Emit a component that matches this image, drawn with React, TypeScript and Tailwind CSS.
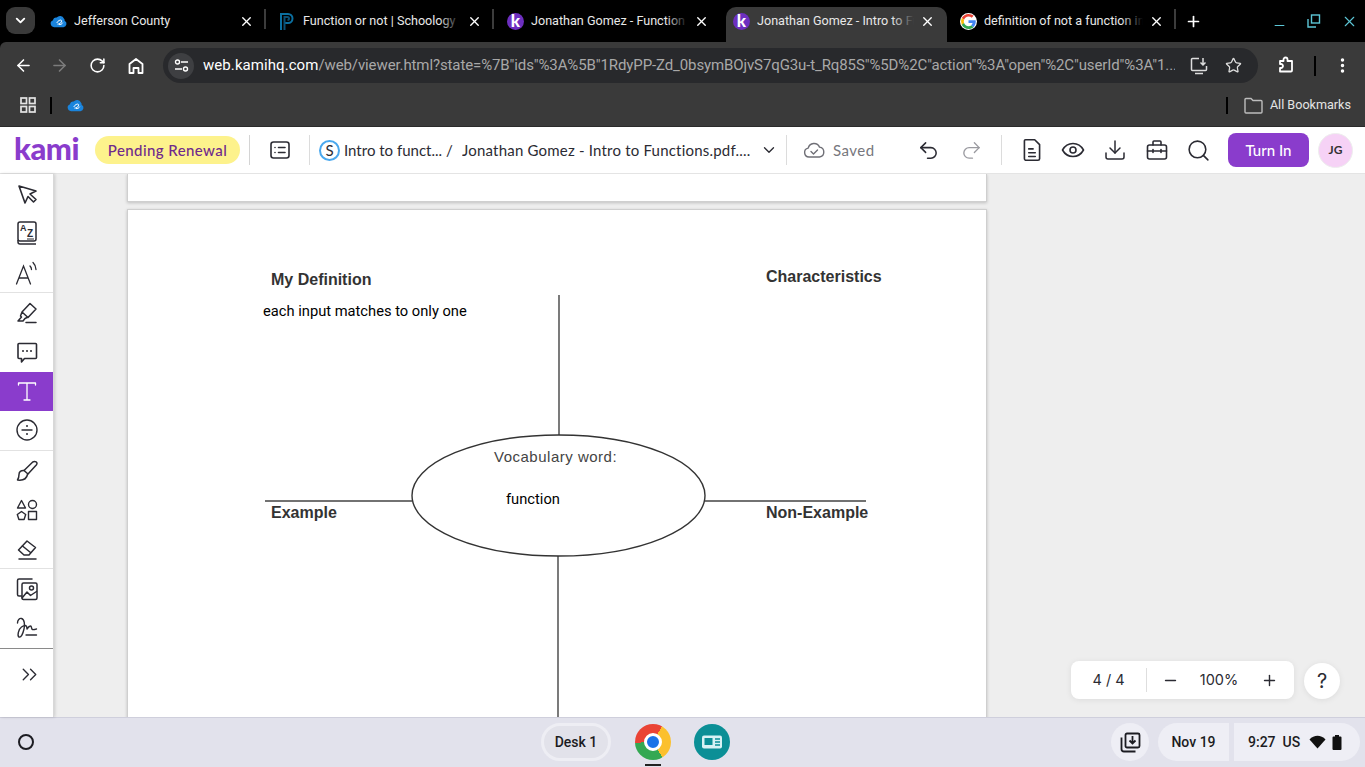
import React from "react";
import {
  ArrowLeft,
  ArrowRight,
  ChevronDown,
  ChevronsRight,
  Download,
  EllipsisVertical,
  Minus,
  Plus,
  RotateCw,
  Search,
  Star,
  Undo2,
  Redo2,
  X,
} from "lucide-react";

const roboto = { fontFamily: "Roboto, sans-serif" };

const Ico = ({ size = 24, className = "", sw = 1.6, children }: { size?: number; className?: string; sw?: number; children: React.ReactNode }) => (
  <svg width={size} height={size} viewBox="0 0 24 24" fill="none" stroke="currentColor" strokeWidth={sw} strokeLinecap="round" strokeLinejoin="round" className={className}>
    {children}
  </svg>
);

const CloudLogo = ({ size = 18 }: { size?: number }) => (
  <svg width={size} height={size * 0.75} viewBox="0 0 24 18">
    <path d="M5.500 17.500a4.800 4.800 0 0 1-1.500-9.300 4 4 0 0 1 5-3.500A5.500 5.500 0 0 1 18.500 6a3.500 3.500 0 0 1 1 3 4.500 4.500 0 0 1-1.500 8.500z" fill="#1a84dc" />
    <path d="M9 12c1.500-3.500 6-5 6.500-3s-3 5-5.500 4.500M12 14c2 .5 4-.5 5-2.500" stroke="#fff" strokeWidth="1.300" fill="none" />
  </svg>
);

const KamiBadge = () => (
  <div className="w-[17px] h-[17px] rounded-full bg-[#6d2fc0] flex items-center justify-center shrink-0 text-white text-[17px] font-black leading-none pb-[1px]" style={{ fontFamily: "Lato, sans-serif" }}>
    k
  </div>
);

const GoogleIcon = () => (
  <svg width="17" height="17" viewBox="0 0 48 48" className="shrink-0 rounded-full bg-white">
    <path fill="#ea4335" d="M24 10c3.500 0 6.500 1.200 9 3.400l5.500-5.500C34.800 4.600 29.800 2.500 24 2.500 15.600 2.500 8.400 7.300 5 14.300l6.500 5C13.200 14 18.100 10 24 10z" />
    <path fill="#4285f4" d="M44.500 24.500c0-1.500-.1-2.900-.4-4.300H24v8.200h11.500c-.5 2.700-2 5-4.300 6.500l6.400 5c3.900-3.500 6.900-9 6.900-15.400z" />
    <path fill="#fbbc05" d="M11.500 28.700A13.500 13.500 0 0 1 11.500 19.300l-6.500-5a21.500 21.500 0 0 0 0 19.400z" />
    <path fill="#34a853" d="M24 45.500c5.800 0 10.700-1.900 14.200-5.200l-6.400-5c-2 1.300-4.500 2.200-7.800 2.200-5.900 0-10.800-4-12.500-9.300l-6.500 5c3.400 7 10.600 12.300 19 12.300z" />
  </svg>
);

const SchoologyIcon = () => (
  <svg width="16" height="19" viewBox="0 0 16 19" fill="none" className="shrink-0">
    <path d="M2 18V2h7a4.500 4.500 0 0 1 0 9H6" stroke="#0b6fa0" strokeWidth="2" />
    <path d="M5.500 18V5h3a1.500 1.500 0 0 1 0 3" stroke="#0a4f74" strokeWidth="2" />
  </svg>
);

const Tab = ({ icon, title, active = false, sep = true, width, pad }: { icon: React.ReactNode; title: string; active?: boolean; sep?: boolean; width: string; pad: string }) => (
  <div className={`${width} ${pad} h-[35px] pb-[7px] pr-[12px] flex items-center relative shrink-0 ${active ? "bg-[#3a3a3a] rounded-t-[10px]" : ""}`}>
    <div className="w-[24px] flex justify-start shrink-0">{icon}</div>
    <div className="flex-1 relative overflow-hidden whitespace-nowrap text-[12.6px] text-[#e8e8e8]">
      {title}
      <div className={`absolute right-0 top-0 bottom-0 w-[22px] bg-gradient-to-l ${active ? "from-[#3a3a3a]" : "from-black"} to-transparent`} />
    </div>
    <X size={15} strokeWidth={2.2} className="text-white shrink-0 ml-[6px]" />
    {sep && <div className="absolute right-0 top-[2px] h-[20px] w-[2px] bg-[#3c3c3c]" />}
  </div>
);

const SideRow = ({ active = false, children }: { active?: boolean; children: React.ReactNode }) => (
  <div className={`flex-1 flex items-center justify-center ${active ? "bg-[#8a3ccc] text-white" : "text-[#2b2b33]"}`}>{children}</div>
);

const Sidebar = () => (
  <div className="w-[54px] shrink-0 bg-white border-r border-[#d8d8d8] shadow-[1px_0_3px_rgba(0,0,0,0.15)] flex flex-col z-10">
    <div className="h-[119px] flex flex-col border-b border-[#e2e2e2]">
      <SideRow>
        <Ico><path d="M4 4l6 17 3-6.500 5.500 5.500 2.500-2.500L15 12l6-3z" /></Ico>
      </SideRow>
      <SideRow>
        <svg width="24" height="26" viewBox="0 0 24 26" fill="none" stroke="currentColor" strokeWidth="1.500">
          <rect x="3" y="2" width="18" height="19" rx="2" />
          <path d="M3 20v2a2 2 0 0 0 2 2h16" />
          <text x="5" y="11" fontSize="9" fill="currentColor" stroke="none" fontWeight="700" fontFamily="Liberation Sans">A</text>
          <text x="12" y="17" fontSize="10" fill="currentColor" stroke="none" fontWeight="700" fontFamily="Liberation Sans">Z</text>
          <path d="M12 19h7" strokeWidth="1" />
        </svg>
      </SideRow>
      <SideRow>
        <svg width="24" height="26" viewBox="0 0 24 26" fill="none" stroke="currentColor" strokeWidth="1.300" strokeLinecap="round">
          <path d="M1.500 25L8.500 7l7 18M4 19h9" />
          <path d="M15 7c1 1 1.500 2 1.500 3.500M18 3.500c2 2 3 4.500 3 7" />
        </svg>
      </SideRow>
    </div>
    <div className="h-[158px] flex flex-col border-b border-[#e2e2e2]">
      <SideRow>
        <svg width="24" height="24" viewBox="0 0 24 24" fill="none" stroke="currentColor" strokeWidth="1.500" strokeLinejoin="round" strokeLinecap="round">
          <path d="M7 11L15 2.500l6 5.500-8 8.500zM7 11l-1.500 4 1 1-3.500 4h5l2-2.500 3-1.500" />
          <path d="M11 21.500h10" />
        </svg>
      </SideRow>
      <SideRow>
        <Ico>
          <path d="M4 3.500h16.500a1 1 0 0 1 1 1v13a1 1 0 0 1-1 1H9.500L6.500 22v-3.500H4a1 1 0 0 1-1-1v-13a1 1 0 0 1 1-1z" />
          <path d="M8 11h.01M12 11h.01M16 11h.01" strokeWidth="2" />
        </Ico>
      </SideRow>
      <SideRow active>
        <Ico sw={1.3}>
          <path d="M3.500 6V4h17v2M12 4v17M9 21h6" />
        </Ico>
      </SideRow>
      <SideRow>
        <Ico sw={1.4}>
          <circle cx="12" cy="12" r="10" />
          <path d="M7 12h10" />
          <circle cx="12" cy="8" r="1" fill="currentColor" stroke="none" />
          <circle cx="12" cy="16" r="1" fill="currentColor" stroke="none" />
        </Ico>
      </SideRow>
    </div>
    <div className="h-[118px] flex flex-col border-b border-[#e2e2e2]">
      <SideRow>
        <Ico sw={1.5}>
          <path d="M20 2.500a2 2 0 0 1 1.500 3.300L13 15l-4-3.500 8.500-8.300a4 4 0 0 1 2.500-.7z" />
          <path d="M9 11.500c-3-.3-5 1.500-5 4 0 2-.5 4-1.500 5.500 4 .5 9-.5 10-5.500" />
        </Ico>
      </SideRow>
      <SideRow>
        <Ico sw={1.4}>
          <path d="M6.500 2.500L10.500 10h-8z" />
          <circle cx="17.500" cy="6.500" r="4" />
          <path d="M6.500 13.500l4.200 3-1.600 5H3.900l-1.600-5z" />
          <rect x="13.500" y="13.500" width="8" height="8" />
        </Ico>
      </SideRow>
      <SideRow>
        <Ico sw={1.5}>
          <path d="M3.500 13L12 4l8.500 6.500-6.500 7.500H9z" />
          <path d="M7.500 9l8 6.500M4 22h17" />
        </Ico>
      </SideRow>
    </div>
    <div className="h-[80px] flex flex-col border-b border-[#8a8a8a]">
      <SideRow>
        <Ico sw={1.5}>
          <path d="M6.500 19H4a1.500 1.500 0 0 1-1.500-1.500V3.500A1.500 1.500 0 0 1 4 2h13" />
          <rect x="7" y="6" width="15" height="16.500" rx="1.500" />
          <circle cx="16.500" cy="11" r="2" />
          <path d="M7 21l5-6 3.500 3.500 6-4" />
        </Ico>
      </SideRow>
      <SideRow>
        <Ico sw={1.4}>
          <path d="M2.500 7c0-3 2-5 4-4.500 3 .7 3.500 6 2.500 10.500S6 22 4 21s-.5-8 2.500-10 5.500-2.500 5.500 2c1-1.500 2-3 3.500-3s.5 3 2 3.500 2.500 0 4-.5" />
          <path d="M11 19h10.500" />
        </Ico>
      </SideRow>
    </div>
    <div className="h-[50px] flex items-center justify-center text-[#2b2b33]">
      <ChevronsRight size={25} strokeWidth={1.3} className="ml-[5px]" />
    </div>
  </div>
);

const SheetLabel = ({ className = "", children }: { className?: string; children: React.ReactNode }) => (
  <div className={`absolute whitespace-nowrap leading-none ${className}`}>{children}</div>
);

const Diagram = () => (
  <div className="bg-white border border-[#cfcfcf] shadow-[0_1px_3px_rgba(0,0,0,0.2)] w-[860px] h-[520px] relative shrink-0" style={{ fontFamily: '"Liberation Sans", Arial, sans-serif' }}>
    <svg width="859" height="520" className="absolute inset-0" fill="none" stroke="#333">
      <path d="M431 85V225" strokeWidth="1.300" />
      <path d="M430 346V507" strokeWidth="1.300" />
      <path d="M137 291H284M577 291H738" strokeWidth="1.500" stroke="#444" />
      <ellipse cx="430.500" cy="285.500" rx="146.500" ry="60.500" strokeWidth="1.400" stroke="#333" />
    </svg>
    <SheetLabel className="left-[143px] top-[62px] text-[16px] font-bold text-[#333]">My Definition</SheetLabel>
    <SheetLabel className="left-[638px] top-[59px] text-[16px] font-bold text-[#333]">Characteristics</SheetLabel>
    <SheetLabel className="left-[143px] top-[295px] text-[16px] font-bold text-[#333]">Example</SheetLabel>
    <SheetLabel className="left-[638px] top-[295px] text-[16px] font-bold text-[#333]">Non-Example</SheetLabel>
    <SheetLabel className="left-[366px] top-[239px] text-[15px] text-[#444] tracking-[0.5px]">Vocabulary word:</SheetLabel>
    <SheetLabel className="left-[135px] top-[94px] text-[14.7px] text-black">
      <span style={roboto}>each input matches to only one</span>
    </SheetLabel>
    <SheetLabel className="left-[378px] top-[282px] text-[14.7px] text-black">
      <span style={roboto}>function</span>
    </SheetLabel>
  </div>
);

const KamiHeader = () => (
  <div className="h-[47px] shrink-0 bg-white border-b border-[#e4e4e4] flex items-center text-[#2b2b33]" style={{ fontFamily: "Lato, sans-serif" }}>
    <div className="w-[95px] pl-[14px] text-[#8a3ccc] text-[31px] font-black leading-none tracking-[-0.5px] pb-[3px]">kami</div>
    <div className="w-[145px] h-[28px] rounded-full bg-[#fdf28c] text-[#6f2a8c] text-[15px] font-medium flex items-center justify-center tracking-[0.42px]">Pending Renewal</div>
    <div className="w-px h-[30px] bg-[#d4d4d4] ml-[9px]" />
    <div className="w-[59px] flex justify-center">
      <Ico size={24} sw={1.6}>
        <rect x="3" y="4" width="18" height="16" rx="2.500" />
        <path d="M7 9.500h.01M7 14.500h.01M10.500 9.500H17M10.500 14.500H17" />
      </Ico>
    </div>
    <div className="w-px h-[30px] bg-[#dcdcdc]" />
    <div className="w-[21px] h-[21px] rounded-full border-2 border-[#4aa8ee] ml-[9px] flex items-center justify-center text-[15px] leading-none shrink-0">S</div>
    <div className="ml-[4px] w-[118px] whitespace-nowrap text-[15px]">Intro to funct... /</div>
    <div className="w-[290px] whitespace-nowrap text-[15px] tracking-[0.2px] overflow-hidden">Jonathan Gomez - Intro to Functions.pdf....</div>
    <ChevronDown size={18} strokeWidth={1.8} className="ml-[8px]" />
    <div className="w-px h-[30px] bg-[#dcdcdc] ml-[8px]" />
    <div className="ml-[15px] text-[#6f6f76]">
      <Ico size={24} sw={1.4}>
        <path d="M7 19a4.500 4.500 0 0 1-.8-8.900 6 6 0 0 1 11.300-1A5 5 0 0 1 17.500 19z" />
        <path d="M9 13.500l2.500 2.500 4-4" />
      </Ico>
    </div>
    <div className="ml-[7px] text-[15px] text-[#77777d] w-[44px] tracking-[0.5px]">Saved</div>
    <Undo2 size={23} strokeWidth={1.6} className="ml-[40px]" />
    <Redo2 size={23} strokeWidth={1.4} className="ml-[20px] text-[#9a9aa0]" />
    <div className="w-px h-[30px] bg-[#dcdcdc] ml-[18px]" />
    <div className="ml-[17px]">
      <Ico size={26} sw={1.5}>
        <path d="M6 2.500h8.500l4.500 4.500v13a1.500 1.500 0 0 1-1.500 1.500h-11.500A1.500 1.500 0 0 1 5 20V3.500a1 1 0 0 1 1-1z" />
        <path d="M9 11h4M9 14.500h6M9 18h6" />
      </Ico>
    </div>
    <div className="ml-[16px]">
      <Ico size={24} sw={1.6}>
        <path d="M1.500 12C4 7.500 8 5.500 12 5.500s8 2 10.500 6.500C20 16.500 16 18.500 12 18.500S4 16.500 1.500 12z" />
        <circle cx="12" cy="12" r="3" />
      </Ico>
    </div>
    <Download size={24} strokeWidth={1.5} className="ml-[18px]" />
    <div className="ml-[18px]">
      <Ico size={24} sw={1.6}>
        <rect x="2.500" y="7" width="19" height="14" rx="2" />
        <path d="M8 7V4a1 1 0 0 1 1-1h6a1 1 0 0 1 1 1v3M2.500 13h19M8 11.500v3M16 11.500v3" />
      </Ico>
    </div>
    <Search size={25} strokeWidth={1.5} className="ml-[17px]" />
    <div className="ml-[17px] w-[81px] h-[34px] rounded-[8px] bg-[#8a3ccc] text-white text-[15px] font-medium flex items-center justify-center">Turn In</div>
    <div className="ml-[9px] w-[35px] h-[35px] rounded-full bg-[#f6d2f6] border border-[#eee] text-[#333] text-[12px] font-bold flex items-center justify-center">JG</div>
  </div>
);

const Shelf = () => (
  <div className="h-[50px] shrink-0 bg-[#e2e2ec] border-t border-[#cfcfdc] pb-[1px] flex items-center relative text-[#1c1c22]" style={roboto}>
    <div className="ml-[18px] w-[16px] h-[16px] rounded-full border-2 border-[#1c1c22]" />
    <div className="ml-[507px] w-[70px] h-[38px] rounded-full bg-[#e2e2ea] border-[3px] border-[#eeeef4] flex items-center justify-center text-[14px] font-medium">Desk 1</div>
    <div className="ml-[24px] w-[36px] h-[36px] rounded-full relative shrink-0" style={{ background: "conic-gradient(from 30deg, #fbc02d 0 33%, #34a853 33% 66%, #ea4335 66% 100%)" }}>
      <div className="absolute inset-[9px] rounded-full bg-[#1a73e8] border-[3px] border-white box-content w-[12px] h-[12px]" />
    </div>
    <div className="absolute left-[645px] bottom-[1px] w-[16px] h-[2px] bg-[#222]" />
    <div className="ml-[23px] w-[36px] h-[36px] rounded-full bg-[#0b8f96] flex items-center justify-center shrink-0">
      <svg width="24" height="18" viewBox="0 0 24 18">
        <rect x="2" y="2.500" width="20" height="13" rx="2" fill="#d8f2f4" />
        <rect x="4.500" y="5" width="8" height="7" fill="#0b8f96" />
        <path d="M15 6h5M15 9h5M15 12h5" stroke="#0b8f96" strokeWidth="1.400" />
      </svg>
    </div>
    <div className="ml-[381px] w-[38px] h-[38px] rounded-full bg-[#eeeef5] flex items-center justify-center shrink-0">
      <svg width="21" height="21" viewBox="0 0 21 21" fill="none" stroke="currentColor" strokeWidth="1.800">
        <rect x="5.500" y="1.500" width="14" height="14" rx="1.500" />
        <path d="M1.500 5.500V17a2.500 2.500 0 0 0 2.500 2.500h11.500" />
        <path d="M12.500 4v7M9.500 8.500l3 3 3-3" strokeWidth="1.800" />
      </svg>
    </div>
    <div className="ml-[9px] w-[71px] h-[38px] rounded-l-full rounded-r-[4px] bg-[#eeeef5] flex items-center justify-center text-[14px] font-medium">Nov 19</div>
    <div className="ml-[5px] w-[126px] h-[38px] rounded-r-full rounded-l-[4px] bg-[#eeeef5] flex items-center pl-[14px] text-[14px] font-medium">
      <span>9:27</span>
      <span className="ml-[7px]">US</span>
      <svg width="17" height="14" viewBox="0 0 17 14" className="ml-[9px]"><path d="M.5 4.500C5-.5 12-.5 16.500 4.500L8.500 13.500z" fill="#111" /></svg>
      <svg width="10" height="15" viewBox="0 0 10 15" className="ml-[6px]"><path d="M3 0h4v1.500h1.500a1 1 0 0 1 1 1V14a1 1 0 0 1-1 1h-7a1 1 0 0 1-1-1V2.500a1 1 0 0 1 1-1H3z" fill="#111" /></svg>
    </div>
  </div>
);

export default function App() {
  return (
    <div className="w-[1365px] h-[767px] flex flex-col overflow-hidden bg-black" style={roboto}>
      {/* tab strip */}
      <div className="h-[42px] shrink-0 bg-black flex items-end relative">
        <div className="ml-[6px] mb-[8px] w-[29px] h-[27px] rounded-[9px] bg-[#3a3a3a] flex items-center justify-center shrink-0">
          <ChevronDown size={15} strokeWidth={3} className="text-white" />
        </div>
        <div className="flex items-end ml-[4px]">
          <Tab icon={<CloudLogo />} title="Jefferson County" width="w-[227px]" pad="pl-[11px]" />
          <Tab icon={<SchoologyIcon />} title="Function or not | Schoology" width="w-[228px]" pad="pl-[13px]" />
          <Tab icon={<KamiBadge />} title="Jonathan Gomez - Function or not" sep={false} width="w-[227px]" pad="pl-[13px]" />
          <div className="w-[5px]" />
          <Tab icon={<KamiBadge />} title="Jonathan Gomez - Intro to Functions" active sep={false} width="w-[221px]" pad="pl-[7px]" />
          <Tab icon={<GoogleIcon />} title="definition of not a function in math" width="w-[229px]" pad="pl-[13px]" />
        </div>
        <Plus size={17} strokeWidth={2.4} className="text-white mb-[12px] ml-[9px]" />
        <div className="absolute right-[7px] top-[10px] flex items-center gap-[20px] text-[#5cc6d6]">
          <Minus size={15} strokeWidth={1.8} className="mt-[8px]" />
          <svg width="14" height="14" viewBox="0 0 14 14" fill="none" stroke="currentColor" strokeWidth="1.400" className="-mt-[2px]"><rect x="4.500" y="1" width="8" height="8" /><path d="M1 5v8h8" /></svg>
          <X size={17} strokeWidth={1.6} />
        </div>
      </div>
      {/* toolbar */}
      <div className="h-[42px] shrink-0 bg-[#3a3a3a] rounded-tl-[6px] pt-[5px] flex items-center text-white">
        <ArrowLeft size={19} strokeWidth={2} className="ml-[14px]" />
        <ArrowRight size={19} strokeWidth={2} className="ml-[17px] text-[#7c7c7c]" />
        <RotateCw size={17} strokeWidth={2.2} className="ml-[20px]" />
        <svg width="18" height="18" viewBox="0 0 18 18" fill="none" stroke="currentColor" strokeWidth="1.800" className="ml-[21px]"><path d="M2.500 16V7L9 2l6.500 5v9h-4v-5h-5v5z" strokeLinejoin="round" /></svg>
        <div className="ml-[18px] w-[1095px] h-[35px] rounded-full bg-[#28292c] flex items-center shrink-0">
          <div className="ml-[5px] w-[26px] h-[26px] rounded-full bg-[#3e3f42] flex items-center justify-center shrink-0">
            <svg width="15" height="13" viewBox="0 0 15 13" fill="none" stroke="#fff" strokeWidth="1.400"><circle cx="3.500" cy="3" r="2" /><path d="M7 3h7M1 10h7" /><circle cx="11.500" cy="10" r="2" /></svg>
          </div>
          <div className="ml-[9px] w-[972px] whitespace-nowrap overflow-hidden text-[15px] tracking-[-0.11px] text-[#a8a8a8]">
            <span className="text-white tracking-[0.07px]">web.kamihq.com</span>/web/viewer.html?state=%7B"ids"%3A%5B"1RdyPP-Zd_0bsymBOjvS7qG3u-t_Rq85S"%5D%2C"action"%3A"open"%2C"userId"%3A"1...
          </div>
          <svg width="18" height="18" viewBox="0 0 18 18" fill="none" stroke="#ddd" strokeWidth="1.500" className="ml-[15px]"><path d="M9 1.500H2.500a1 1 0 0 0-1 1v10a1 1 0 0 0 1 1h13a1 1 0 0 0 1-1V9M5 16.500h8M13 1v7M10.500 5.500L13 8l2.500-2.500" /></svg>
          <Star size={17} strokeWidth={1.8} className="ml-[17px] text-[#ddd]" />
        </div>
        <svg width="19" height="19" viewBox="0 0 19 19" fill="none" stroke="currentColor" strokeWidth="1.800" className="ml-[19px]"><path d="M3 5h3.500V3.500a2 2 0 0 1 4 0V5H15v9.500a1 1 0 0 1-1 1H3v-3.500h1a2 2 0 0 0 0-4H3z" strokeLinejoin="round" /></svg>
        <div className="ml-[18px] w-[2px] h-[20px] bg-black" />
        <EllipsisVertical size={19} strokeWidth={2.4} className="ml-[17px]" />
      </div>
      {/* bookmarks */}
      <div className="h-[43px] shrink-0 bg-[#3a3a3a] border-b border-[#2a2a2a] flex items-center text-[#e4e4e4]">
        <svg width="16" height="16" viewBox="0 0 16 16" fill="none" stroke="currentColor" strokeWidth="1.700" className="ml-[20px]"><rect x="1" y="1" width="5.500" height="5.500" /><rect x="9.500" y="1" width="5.500" height="5.500" /><rect x="1" y="9.500" width="5.500" height="5.500" /><rect x="9.500" y="9.500" width="5.500" height="5.500" /></svg>
        <div className="ml-[14px] w-[2px] h-[17px] bg-black" />
        <div className="ml-[15px]"><CloudLogo /></div>
        <div className="ml-auto w-[2px] h-[17px] bg-black" />
        <svg width="19" height="17" viewBox="0 0 19 17" fill="none" stroke="#bdbdbd" strokeWidth="1.400" className="ml-[16px]"><path d="M1 2.500a1 1 0 0 1 1-1h5l2 2h8a1 1 0 0 1 1 1V15a1 1 0 0 1-1 1H2a1 1 0 0 1-1-1z" /></svg>
        <div className="ml-[7px] mr-[14px] text-[12.6px]">All Bookmarks</div>
      </div>
      <KamiHeader />
      {/* viewer */}
      <div className="flex-1 min-h-0 flex bg-[#eeeeee] relative">
        <Sidebar />
        <div className="flex-1 overflow-hidden flex flex-col gap-[7px] pl-[73px]">
          <div className="bg-white border border-[#cfcfcf] border-t-0 shadow-[0_1px_3px_rgba(0,0,0,0.2)] w-[860px] h-[28px] shrink-0" />
          <Diagram />
        </div>
        <div className="absolute right-[71px] bottom-[18px] w-[223px] h-[38px] rounded-[8px] bg-white shadow-[0_1px_6px_rgba(0,0,0,0.08)] flex items-center text-[14.5px] text-[#2b2b33]" style={{ fontFamily: "Inter, sans-serif" }}>
          <div className="w-[75px] text-center">4 / 4</div>
          <div className="w-px h-[24px] bg-[#dedede]" />
          <Minus size={17} strokeWidth={2} className="ml-[15px]" />
          <div className="ml-[19px] w-[42px] text-center">100%</div>
          <Plus size={17} strokeWidth={2} className="ml-[21px]" />
        </div>
        <div className="absolute right-[25px] bottom-[18px] w-[36px] h-[36px] rounded-full bg-white shadow-[0_1px_6px_rgba(0,0,0,0.08)] flex items-center justify-center text-[20px] text-[#2b2b33]" style={{ fontFamily: "Inter, sans-serif" }}>?</div>
      </div>
      <Shelf />
    </div>
  );
}
